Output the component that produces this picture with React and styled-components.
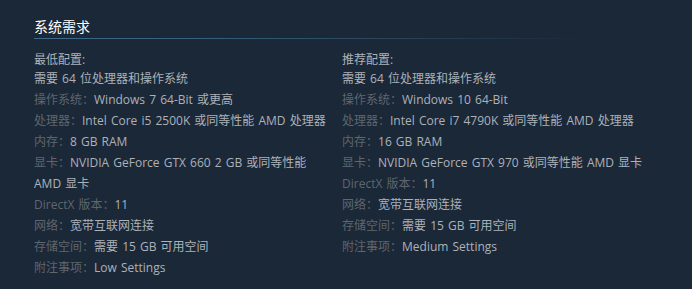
import React from "react";
import styled, {createGlobalStyle} from "styled-components";

const GlobalStyle = createGlobalStyle`
    body{
        margin: 0;
        background-color: #1b2838;
        font-family: "Open Sans", "Noto Sans CJK SC", sans-serif;
    }
`

const StyledSection = styled.div`
    padding: 17px 0 0 34px;
    width: 620px;
    h2{
        margin: 0;
        width: 556px;
        font-size: 14px;
        font-weight: normal;
        line-height: 20px;
        color: #ffffff;
        background-image: linear-gradient(to right, #3d6a88 0%, #35607e 30%, rgba(27, 40, 56, 0) 100%);
        background-size: 100% 1px;
        background-repeat: no-repeat;
        background-position: left bottom;
        padding-bottom: 2px;
    }
    .cols{
        margin-top: 10px;
        display: grid;
        grid-template-columns: 302px 302px;
        column-gap: 6px;
    }
`

const StyledCol = styled.div`
    font-size: 12px;
    line-height: 21px;
    word-spacing: 1px;
    color: #acb2b8;
    .title{
        margin: 0 0 -2px;
    }
    ul{
        list-style: none;
        margin: 0;
        padding: 0;
    }
    li .label{
        color: #5f666d;
    }
`

const minimum = [
    [null, "需要 64 位处理器和操作系统"],
    ["操作系统：", "Windows 7 64-Bit 或更高"],
    ["处理器：", "Intel Core i5 2500K 或同等性能 AMD 处理器"],
    ["内存：", "8 GB RAM"],
    ["显卡：", "NVIDIA GeForce GTX 660 2 GB 或同等性能 AMD 显卡"],
    ["DirectX 版本：", "11"],
    ["网络：", "宽带互联网连接"],
    ["存储空间：", "需要 15 GB 可用空间"],
    ["附注事项：", "Low Settings"]
]

const recommended = [
    [null, "需要 64 位处理器和操作系统"],
    ["操作系统：", "Windows 10 64-Bit"],
    ["处理器：", "Intel Core i7 4790K 或同等性能 AMD 处理器"],
    ["内存：", "16 GB RAM"],
    ["显卡：", "NVIDIA GeForce GTX 970 或同等性能 AMD 显卡"],
    ["DirectX 版本：", "11"],
    ["网络：", "宽带互联网连接"],
    ["存储空间：", "需要 15 GB 可用空间"],
    ["附注事项：", "Medium Settings"]
]

function ReqColumn({title, rows}){
    return (
        <StyledCol>
            <p className="title">{title}</p>
            <ul>
                {rows.map(([label, value], i) => (
                    <li key={i}>
                        {label && <span className="label">{label}</span>}
                        {value}
                    </li>
                ))}
            </ul>
        </StyledCol>
    )
}

export default function App(){
    return (
        <>
            <GlobalStyle />
            <StyledSection>
                <h2>系统需求</h2>
                <div className="cols">
                    <ReqColumn title="最低配置:" rows={minimum} />
                    <ReqColumn title="推荐配置:" rows={recommended} />
                </div>
            </StyledSection>
        </>
    )
}
